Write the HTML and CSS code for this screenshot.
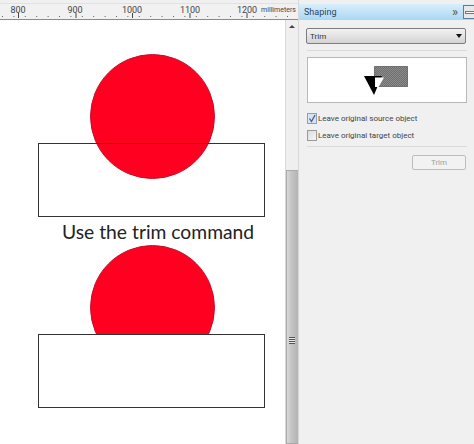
FILE: index.html
```html
<!DOCTYPE html>
<html lang="en">
<head>
<meta charset="utf-8">
<title>Shaping</title>
<link rel="stylesheet" href="styles.css">
</head>
<body>
<div class="app">
  <div class="work">
    <div class="ruler">
      <span class="tick-label l1">800</span>
      <span class="tick-label l2">900</span>
      <span class="tick-label l3">1000</span>
      <span class="tick-label l4">1100</span>
      <span class="tick-label l5">1200</span>
      <span class="tick-label unit">millimeters</span>
      <svg class="ticks" width="298" height="6" viewBox="0 0 298 6">
        <path d="M18.500 0V5M76 0V5M132.500 0V5M190 0V5M247 0V5" stroke="#444" fill="none"/>
        <path d="M2 3.500H298" stroke="#666" stroke-dasharray="1 10.400" fill="none"/>
      </svg>
    </div>
    <div class="stage">
      <div class="canvas">
        <div class="circle c1"></div>
        <div class="rect r1"></div>
        <div class="caption">Use the trim command</div>
        <div class="clip"><div class="circle c2"></div></div>
        <div class="rect r2"></div>
      </div>
      <div class="scrollbar">
        <div class="arrow"></div>
        <div class="thumb"><div class="grip"></div></div>
      </div>
    </div>
  </div>
  <aside class="panel">
    <header class="title">
      <span class="title-text">Shaping</span>
      <span class="chev">»</span>
      <span class="pin"><span class="pin-bar"></span></span>
    </header>
    <div class="body">
      <div class="select"><span>Trim</span><span class="caret"></span></div>
      <div class="rule rule-top"></div>
      <div class="preview">
        <svg width="61" height="40" viewBox="0 0 61 40">
          <defs>
            <pattern id="dither" width="2" height="2" patternUnits="userSpaceOnUse">
              <rect width="2" height="2" fill="#8c8c8c"/>
              <rect width="1" height="1" fill="#6e6e6e"/>
              <rect x="1" y="1" width="1" height="1" fill="#6e6e6e"/>
            </pattern>
          </defs>
          <rect x="17.500" y="6.500" width="33" height="20" fill="url(#dither)" stroke="#222" stroke-dasharray="1 1"/>
          <path d="M7 16H25L17 35Z" fill="#000"/>
          <path d="M18 17.500H27L21.500 27H18Z" fill="#fff"/>
        </svg>
      </div>
      <label class="check"><span class="box on"><svg width="11" height="11" viewBox="0 0 11 11"><path d="M2.500 5.500L4.500 8.500L8 2" fill="none" stroke="#4a5f86" stroke-width="1.300"/></svg></span>Leave original source object</label>
      <label class="check"><span class="box"></span>Leave original target object</label>
      <div class="rule rule-bottom"></div>
      <div class="actions"><span class="btn">Trim</span></div>
    </div>
  </aside>
</div>
</body>
</html>
```
FILE: styles.css
```css
* { box-sizing: border-box; }
html, body { margin: 0; padding: 0; }
body { width: 474px; height: 444px; overflow: hidden; background: #f0f0f0; font-family: Roboto, "Liberation Sans", sans-serif; }
.app { display: flex; width: 474px; height: 444px; }
.work { width: 298px; display: flex; flex-direction: column; padding-top: 3px; }
.ruler { position: relative; height: 17px; background: #f1f1f1; border-bottom: 1px solid #8a8a8a; flex: none; border-top: 1px solid #e2e2e2; }
.tick-label { position: absolute; top: 1px; font-size: 9px; color: #444; transform: translateX(-50%); line-height: 10px; }
.l1 { left: 18px; } .l2 { left: 75px; } .l3 { left: 132px; } .l4 { left: 190px; } .l5 { left: 247px; }
.unit { left: 278.500px; font-size: 7px; }
.ticks { position: absolute; left: 0; bottom: 0; }
.stage { flex: 1; display: flex; min-height: 0; }
.canvas { position: relative; width: 285px; background: #fff; }
.scrollbar { width: 13px; background: #efefef; border-left: 1px solid #d9d9d9; display: flex; flex-direction: column; }
.arrow { margin: 5px auto 0; width: 0; height: 0; border-left: 3px solid transparent; border-right: 3px solid transparent; border-bottom: 3px solid #444; }
.thumb { margin-top: 142px; flex: 1; background: linear-gradient(90deg, #d8d8d8, #c4c4c4 40%, #b4b4b4); border: 1px solid #aaa; border-right: 0; position: relative; }
.grip { position: absolute; left: 2px; top: 166px; width: 6px; height: 7px; background: repeating-linear-gradient(#555 0 1px, #e5e5e5 1px 2px); }
.circle { position: absolute; width: 125px; height: 125px; border-radius: 50%; background: #ff0020; border: 1px solid #c0102a; }
.c1 { left: 90px; top: 34px; }
.rect { position: absolute; left: 38px; width: 227px; height: 74px; border: 1px solid #333; }
.r1 { top: 123px; }
.r2 { top: 314px; background: #fff; }
.caption { position: absolute; left: 62px; top: 199px; font-family: Lato, sans-serif; font-size: 19.300px; line-height: 26px; color: #222; white-space: nowrap; }
.clip { position: absolute; left: 0; top: 225px; width: 285px; height: 90px; overflow: hidden; }
.c2 { left: 90px; top: 0; }
.panel { width: 176px; background: #f0f0f0; display: flex; flex-direction: column; border-left: 1px solid #d8d8d8; padding-top: 4px; }
.title { height: 16px; display: flex; align-items: center; padding: 0 0 0 5px; background: linear-gradient(#d8eefb, #a9d8f5); flex: none; }
.title-text { font-size: 9px; color: #2c4560; flex: 1; }
.chev { font-size: 13px; color: #555; line-height: 12px; margin-right: 5px; }
.pin { width: 11px; height: 14px; border: 1px solid #5d7d9a; border-right: 0; background: #e8e8e8; display: flex; align-items: center; padding-left: 1px; }
.pin-bar { width: 9px; height: 3px; background: #f8f8f8; border: 1px solid #777; border-right: 0; }
.body { padding: 8px 7px 0 8px; display: flex; flex-direction: column; }
.select { height: 16px; margin: 0 1px 0 -1px; border: 1px solid #7d7d7d; border-radius: 2px; background: linear-gradient(#f2f2f2, #d4d4d4); display: flex; justify-content: space-between; align-items: center; padding: 0 3px; font-size: 8px; color: #333; }
.caret { width: 0; height: 0; border-left: 3.500px solid transparent; border-right: 3.500px solid transparent; border-top: 4px solid #111; }
.rule { height: 1px; background: #dadada; }
.rule-top { margin: 6px 0; }
.rule-bottom { margin: 2px 0 8px; }
.preview { height: 46px; background: #fff; border: 1px solid #b8b8b8; display: flex; justify-content: center; align-items: center; margin-bottom: 7px; }
.check { display: flex; align-items: center; gap: 1px; height: 17px; font-size: 8px; color: #444; }
.box { width: 10px; height: 11px; border: 1px solid #9a9a9a; background: linear-gradient(135deg, #dcdcdc, #f6f6f6); display: block; flex: none; }
.box.on { background: #d5e3f3; border-color: #8aa0bc; }
.box svg { display: block; margin: -1px; }
.actions { display: flex; justify-content: flex-end; padding-right: 1px; }
.btn { width: 54px; height: 15px; border: 1px solid #bdbdbd; border-radius: 2px; background: #f2f2f2; color: #a0a0a0; font-size: 8px; display: flex; align-items: center; justify-content: center; }
```
